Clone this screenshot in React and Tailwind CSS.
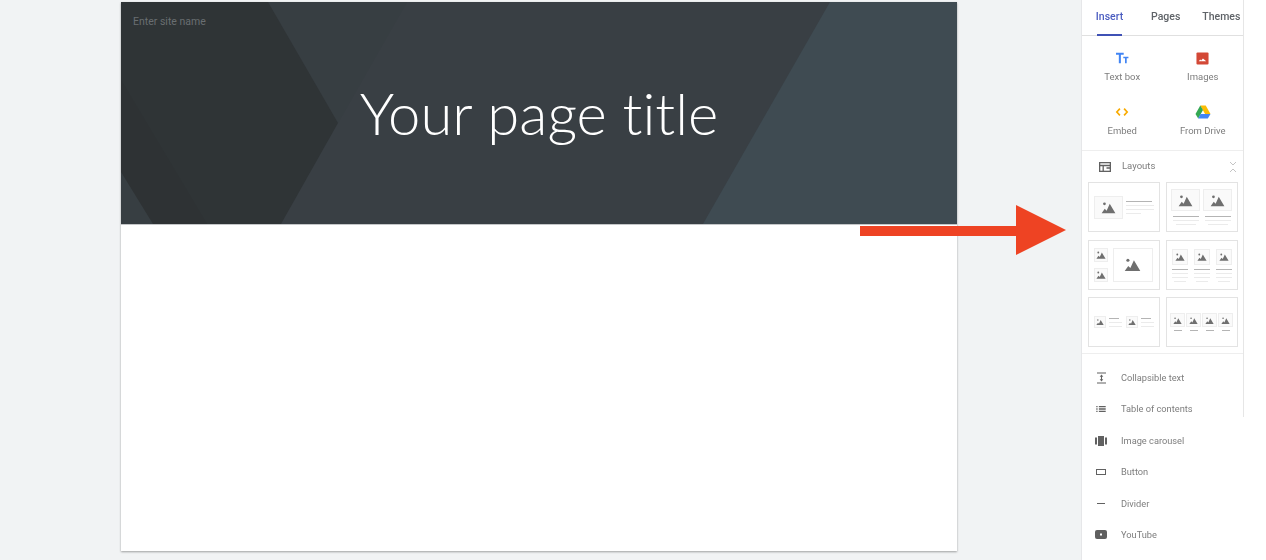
import React from "react";

const sans = "font-['Roboto',sans-serif]";

const Mountain = ({ className }) => (
  <svg viewBox="0 0 24 24" className={className} fill="#6f6f6f">
    <circle cx="5.500" cy="6" r="2.200" />
    <path d="M1 21l5-7 3 3L14 6l9 15z" />
  </svg>
);

const Thumb = ({ className, icon }) => (
  <div className={`flex items-center justify-center border border-[#eeeeee] bg-[#fafafa] ${className}`}>
    <Mountain className={icon} />
  </div>
);

const Line = ({ w, dark }) => (
  <div className={`h-px ${w} ${dark ? "bg-[#b4b4b4]" : "bg-[#ebebeb]"}`} />
);

const Card = ({ children, className = "" }) => (
  <div className={`h-[50px] w-[72px] border border-[#e3e3e3] bg-white ${className}`}>{children}</div>
);

const TextBoxIcon = () => (
  <svg viewBox="0 0 16 14" className="h-[12px] w-[14px]" fill="#4285f4">
    <path d="M1 1h9v2.200H6.700V13H4.300V3.200H1z" />
    <path d="M9.500 5.500H15.500v1.700h-2V13h-2V7.200h-2z" />
  </svg>
);

const ImagesIcon = () => (
  <svg viewBox="0 0 14 14" className="h-[13px] w-[13px]">
    <rect width="13" height="13" x="0.500" y="0.500" rx="1.200" fill="#d34836" />
    <path d="M3 10l1.500-2 1 1.200L7.500 7l3.500 3z" fill="#fff" />
  </svg>
);

const EmbedIcon = () => (
  <svg viewBox="0 0 16 12" className="h-[10px] w-[14px]" fill="none" stroke="#f9ab00" strokeWidth="2">
    <path d="M5.500 2L1.800 6l3.700 4M10.500 2l3.700 4-3.700 4" />
  </svg>
);

const DriveIcon = () => (
  <svg viewBox="0 0 16 14" className="h-[14px] w-[16px]">
    <path d="M5.300 0.500h5.400L15.500 9h-5.400z" fill="#fbbc04" />
    <path d="M5.300 0.500L0.500 9l2.700 4.500L8 5z" fill="#34a853" />
    <path d="M5.500 9h10l-2.700 4.500H3.200z" fill="#4285f4" />
  </svg>
);

const LayoutsIcon = () => (
  <svg viewBox="0 0 12 10" className="h-[10px] w-[12px]" fill="none" stroke="#616161" strokeWidth="1.300">
    <rect x="0.650" y="0.650" width="10.700" height="8.700" />
    <path d="M0.600 3.500h10.800M4.200 3.500v5.900M7.500 6h3.900" />
  </svg>
);

const Collapse = () => (
  <svg viewBox="0 0 8 12" className="h-[12px] w-[8px]" fill="none" stroke="#c4c4c4" strokeWidth="1">
    <path d="M1 1l3 3 3-3M1 11l3-3 3 3" />
  </svg>
);

const CollapsibleIcon = () => (
  <svg viewBox="0 0 10 12" className="h-[12px] w-[9px]" fill="#616161">
    <path d="M0 0h10v1H0zM0 11h10v1H0zM5 2l2 2.500H5.600v3H7L5 10 3 7.500h1.400v-3H3z" />
  </svg>
);

const TocIcon = () => (
  <svg viewBox="0 0 11 7" className="h-[6px] w-[10px]" fill="#616161">
    <path d="M0 0h1.500v1.500H0zM3 0h8v1.500H3zM0 2.750h1.500v1.500H0zM3 2.750h8v1.500H3zM0 5.500h1.500V7H0zM3 5.500h8V7H3z" />
  </svg>
);

const CarouselIcon = () => (
  <svg viewBox="0 0 12 10" className="h-[10px] w-[12px]" fill="#616161">
    <path d="M3 0h6v10H3zM0 1.500h2v7H0zM10 1.500h2v7h-2z" />
  </svg>
);

const ButtonIcon = () => (
  <div className="h-[6px] w-[10px] border-[1.500px] border-[#616161]" />
);

const DividerIcon = () => <div className="h-[1.500px] w-[8px] bg-[#616161]" />;

const YoutubeIcon = () => (
  <svg viewBox="0 0 12 9" className="h-[9px] w-[12px]">
    <rect width="12" height="9" rx="2" fill="#5f5f5f" />
    <rect x="5" y="3.500" width="2" height="2" fill="#fff" />
  </svg>
);

const tiles = [
  { label: "Text box", icon: <TextBoxIcon /> },
  { label: "Images", icon: <ImagesIcon /> },
  { label: "Embed", icon: <EmbedIcon /> },
  { label: "From Drive", icon: <DriveIcon /> },
];

const Row = ({ icon, label, className = "" }) => (
  <div className={`flex h-[31.400px] items-center ${className}`}>
    <div className="flex w-[39px] justify-end pr-[12px]">
      <div className="flex w-[16px] justify-center">{icon}</div>
    </div>
    <span className="text-[9.250px] text-[#7d7d7d]">{label}</span>
  </div>
);

const App = () => {
  return (
    <div className={`relative flex h-[560px] w-[1266px] overflow-hidden bg-white ${sans}`}>
      {/* Page canvas */}
      <div className="h-full w-[1082px] border-r border-[#e6e7e9] bg-[#f1f3f4] pl-[121px] pt-[2px]">
        <div className="h-[549px] w-[836px] bg-white shadow-[0_1px_2px_rgba(0,0,0,0.35)]">
          <div className="relative h-[223px] overflow-hidden border-b border-[#c4c6c8] bg-[#393f44]">
            <svg viewBox="0 0 836 222" className="absolute inset-0 h-full w-full">
              <polygon points="709,0 836,0 836,222 582,222" fill="#3f4b52" />
              <polygon points="147,0 286,0 217,121" fill="#373e42" />
              <polygon points="0,0 147,0 217,121 160,222 0,222" fill="#2f3436" />
              <polygon points="0,78 86,222 32,222 0,170" fill="#2e3234" />
              <polygon points="0,170 32,222 0,222" fill="#373e42" />
            </svg>
            <div className="relative pl-[12px] pt-[13px] text-[10.500px] leading-[14px] text-[#696e71]">Enter site name</div>
            <h1 className="relative mt-[44px] text-center font-['Lato',sans-serif] text-[58px] font-light leading-[80px] text-white [font-variant-ligatures:none]">
              Your page title
            </h1>
          </div>
        </div>
      </div>

      {/* Insert panel */}
      <div className="w-[162px] blur-[0.3px]">
        <div className="h-[417px] border-r border-[#e6e6e6]">
          <div className="flex h-[36px] border-b border-[#e0e0e0] text-[10.500px] font-medium text-[#5f6368]">
            <div className="ml-[15px] flex h-[36px] w-[25px] items-center justify-center border-b-2 border-[#3f51b5] pb-px text-[#4a5cc0]">Insert</div>
            <div className="ml-[29px] flex h-[33px] items-center pt-px">Pages</div>
            <div className="ml-[22px] flex h-[33px] items-center pt-px">Themes</div>
          </div>

          <div className="grid h-[115px] grid-cols-2 content-start border-b border-[#eeeeee] pt-[13px]">
            {tiles.map((tile) => (
              <div key={tile.label} className="flex h-[54px] flex-col items-center">
                <div className="flex h-[18px] items-center">{tile.icon}</div>
                <span className="mt-[3px] text-[9.500px] leading-[14px] text-[#7d7d7d]">{tile.label}</span>
              </div>
            ))}
          </div>

          <div className="flex h-[31px] items-center justify-between pl-[17px] pr-[6px]">
            <div className="flex items-center gap-[11px]">
              <LayoutsIcon />
              <span className="text-[9.500px] text-[#7d7d7d]">Layouts</span>
            </div>
            <Collapse />
          </div>

          <div className="border-b border-[#eeeeee] pb-[6px]">
            <div className="grid grid-cols-[72px_72px] justify-center gap-x-[6px] gap-y-[7.500px]">
              <Card className="flex items-center gap-[3px] pl-[5px]">
                <Thumb className="h-[23px] w-[29px]" icon="h-[15px] w-[15px]" />
                <div className="flex flex-col gap-[3px]">
                  <Line w="w-[26px]" dark />
                  <Line w="w-[28px]" />
                  <Line w="w-[28px]" />
                  <Line w="w-[15px]" />
                </div>
              </Card>
              <Card className="flex justify-center gap-[3px] pt-[6px]">
                {[0, 1].map((i) => (
                  <div key={i} className="flex flex-col items-center gap-[3px]">
                    <Thumb className="mb-[2px] h-[22px] w-[29px]" icon="h-[15px] w-[15px]" />
                    <Line w="w-[26px]" dark />
                    <Line w="w-[26px]" />
                    <Line w="w-[20px]" />
                  </div>
                ))}
              </Card>
              <Card className="flex items-center gap-[5px] pl-[5px]">
                <div className="flex flex-col gap-[6px]">
                  <Thumb className="h-[14px] w-[14px]" icon="h-[10px] w-[10px]" />
                  <Thumb className="h-[14px] w-[14px]" icon="h-[10px] w-[10px]" />
                </div>
                <Thumb className="h-[34px] w-[40px] bg-white" icon="h-[17px] w-[17px]" />
              </Card>
              <Card className="flex justify-center gap-[6px] pt-[8px]">
                {[0, 1, 2].map((i) => (
                  <div key={i} className="flex flex-col items-center gap-[3px]">
                    <Thumb className="mb-[1px] h-[16px] w-[16px]" icon="h-[10px] w-[10px]" />
                    <Line w="w-[16px]" dark />
                    <Line w="w-[16px]" />
                    <Line w="w-[16px]" />
                    <Line w="w-[12px]" />
                  </div>
                ))}
              </Card>
              <Card className="flex items-center justify-center gap-[4px]">
                {[0, 1].map((i) => (
                  <div key={i} className="flex items-center gap-[3px]">
                    <Thumb className="h-[12px] w-[12px]" icon="h-[8px] w-[8px]" />
                    <div className="flex flex-col gap-[3px]">
                      <Line w="w-[10px]" dark />
                      <Line w="w-[13px]" />
                      <Line w="w-[13px]" />
                    </div>
                  </div>
                ))}
              </Card>
              <Card className="flex items-center justify-center gap-px">
                {[0, 1, 2, 3].map((i) => (
                  <div key={i} className="flex flex-col items-center gap-[3px]">
                    <Thumb className="h-[14px] w-[15px]" icon="h-[9px] w-[9px]" />
                    <Line w="w-[8px]" dark />
                  </div>
                ))}
              </Card>
            </div>
          </div>

          <div className="pt-[8px]">
            <Row icon={<CollapsibleIcon />} label="Collapsible text" />
            <Row icon={<TocIcon />} label="Table of contents" />
          </div>
        </div>
        <Row icon={<CarouselIcon />} label="Image carousel" className="mt-[8px]" />
        <Row icon={<ButtonIcon />} label="Button" />
        <Row icon={<DividerIcon />} label="Divider" />
        <Row icon={<YoutubeIcon />} label="YouTube" />
      </div>

      {/* Annotation arrow */}
      <svg viewBox="0 0 206 50" className="absolute left-[860px] top-[205px] h-[50px] w-[206px]">
        <polygon points="0,21 156,21 156,0 206,25 156,50 156,31 0,31" fill="#ee4323" />
      </svg>
    </div>
  );
};

export default App;
